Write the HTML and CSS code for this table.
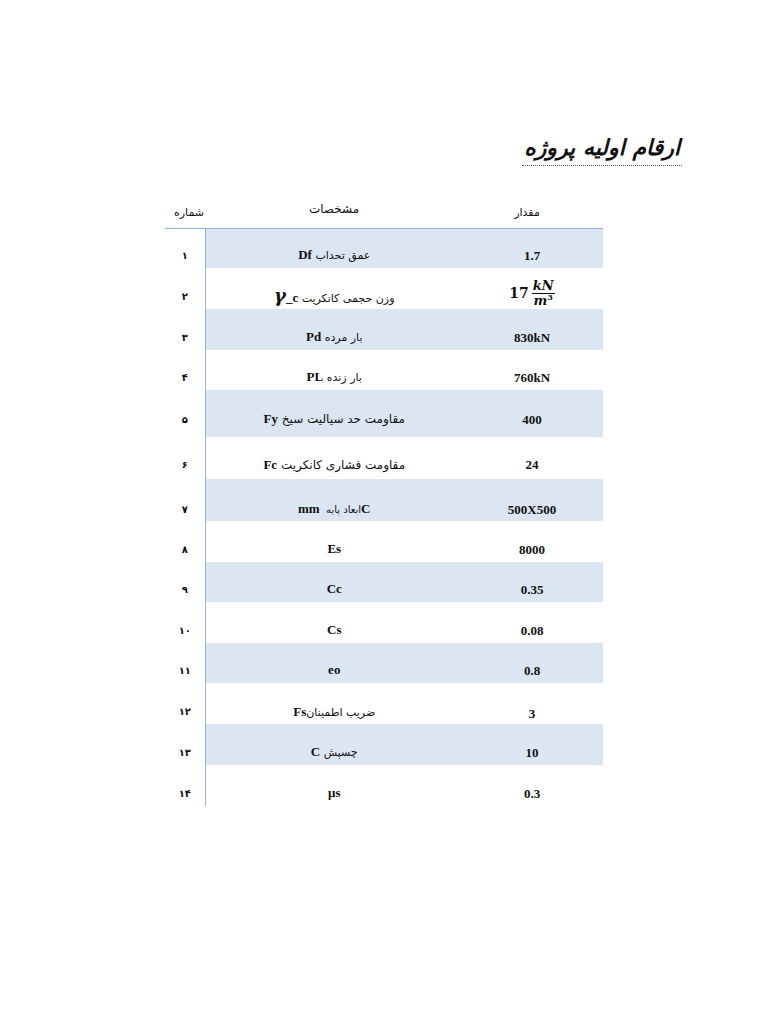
FILE: index.html
```html
<!DOCTYPE html>
<html lang="fa">
<head>
<meta charset="utf-8">
<title>ارقام اولیه پروژه</title>
<link rel="stylesheet" href="styles.css">
</head>
<body>
<div class="page">
  <div class="title-row">
    <h1 class="title" dir="rtl">ارقام اولیه پروژه</h1>
  </div>
  <table class="data">
    <colgroup>
      <col class="col-num">
      <col class="col-spec">
      <col class="col-val">
    </colgroup>
    <thead>
      <tr>
        <th class="c-num" dir="rtl">شماره</th>
        <th class="c-spec" dir="rtl">مشخصات</th>
        <th class="c-val" dir="rtl">مقدار</th>
      </tr>
    </thead>
    <tbody>
      <tr class="shade h40"><td class="c-num">۱</td><td class="c-spec" dir="rtl">عمق تحداب <b>Df</b></td><td class="c-val">1.7</td></tr>
      <tr class="h41 r2"><td class="c-num">۲</td><td class="c-spec" dir="rtl">وزن حجمی کانکریت <span class="gamma">γ</span><b>_c</b></td><td class="c-val"><span class="unit"><b>17</b><span class="frac"><span class="num">kN</span><span class="den">m<sup>3</sup></span></span></span></td></tr>
      <tr class="shade h41"><td class="c-num">۳</td><td class="c-spec" dir="rtl">بار مرده <b>Pd</b></td><td class="c-val">830kN</td></tr>
      <tr class="h40"><td class="c-num">۴</td><td class="c-spec" dir="rtl">بار زنده <b>PL</b></td><td class="c-val">760kN</td></tr>
      <tr class="shade h47 r5"><td class="c-num">۵</td><td class="c-spec big" dir="rtl">مقاومت حد سیالیت سیخ <b>Fy</b></td><td class="c-val">400</td></tr>
      <tr class="h42 r6"><td class="c-num">۶</td><td class="c-spec big" dir="rtl">مقاومت فشاری کانکریت <b>Fc</b></td><td class="c-val">24</td></tr>
      <tr class="shade h42 r7"><td class="c-num">۷</td><td class="c-spec small" dir="rtl"><b>C</b>ابعاد پایه&nbsp;&nbsp;<b>mm</b></td><td class="c-val">500X500</td></tr>
      <tr class="h41"><td class="c-num">۸</td><td class="c-spec"><b>Es</b></td><td class="c-val">8000</td></tr>
      <tr class="shade h40"><td class="c-num">۹</td><td class="c-spec"><b>Cc</b></td><td class="c-val">0.35</td></tr>
      <tr class="h41"><td class="c-num">۱۰</td><td class="c-spec"><b>Cs</b></td><td class="c-val">0.08</td></tr>
      <tr class="shade h40"><td class="c-num">۱۱</td><td class="c-spec"><b>eo</b></td><td class="c-val">0.8</td></tr>
      <tr class="h41 r12"><td class="c-num">۱۲</td><td class="c-spec" dir="rtl">ضریب اطمینان<b>Fs</b></td><td class="c-val">3</td></tr>
      <tr class="shade h41"><td class="c-num">۱۳</td><td class="c-spec" dir="rtl">چسپش <b>C</b></td><td class="c-val">10</td></tr>
      <tr class="h41"><td class="c-num">۱۴</td><td class="c-spec"><b>μs</b></td><td class="c-val">0.3</td></tr>
    </tbody>
  </table>
</div>
</body>
</html>
```

FILE: styles.css
```css
html, body {
  margin: 0;
  padding: 0;
  background: #ffffff;
}

body {
  font-family: "Liberation Serif", "DejaVu Sans", serif;
  color: #111111;
}

.page {
  width: 768px;
  height: 1024px;
  padding-top: 131px;
  box-sizing: border-box;
}

.title-row {
  display: flex;
  justify-content: flex-end;
  padding-right: 86px;
}

.title {
  margin: 0;
  font-family: "DejaVu Sans", sans-serif;
  font-weight: bold;
  font-size: 22px;
  line-height: 34px;
  font-style: italic;
  border-bottom: 1px dotted #555555;
  padding: 0 2px;
}

.data {
  margin-top: 32px;
  margin-left: 165px;
  width: 438px;
  border-collapse: collapse;
  table-layout: fixed;
}

.col-num { width: 40px; }
.col-spec { width: 258px; }
.col-val { width: 140px; }

.data th,
.data td {
  box-sizing: border-box;
}

.data th {
  font-family: "DejaVu Sans", sans-serif;
  font-weight: normal;
  font-size: 11px;
  height: 30px;
  padding: 0 0 9px 0;
  vertical-align: bottom;
  border-bottom: 1px solid #8db3e2;
}

.data th.c-num {
  text-align: right;
  padding-right: 1px;
}

.data th.c-spec {
  padding-bottom: 12px;
  font-size: 12px;
}

.data th.c-val {
  text-align: center;
  padding-right: 12px;
}

.data td {
  text-align: center;
  vertical-align: bottom;
  padding: 0 0 4px 0;
  font-size: 13px;
  font-weight: bold;
  line-height: 16px;
}

.data td.c-num {
  font-family: "DejaVu Sans", sans-serif;
  font-size: 10px;
  font-weight: bold;
  text-align: center;
  border-right: 1px solid #8db3e2;
}

.data td.c-spec {
  font-family: "DejaVu Sans", "Liberation Serif", sans-serif;
  font-weight: normal;
  font-size: 11px;
}

.data td.c-spec b {
  font-family: "Liberation Serif", serif;
  font-weight: bold;
  font-size: 13px;
}

.data td.c-spec.big {
  font-size: 12px;
}

.data td.c-spec.small {
  font-size: 10px;
}

.data td.c-val {
  padding-right: 2px;
}

.data tr.r2 td.c-spec { padding-bottom: 2px; }
.data tr.r5 td { padding-bottom: 9px; }
.data tr.r5 td.c-spec { padding-bottom: 10px; }
.data tr.r6 td { padding-bottom: 6px; }
.data tr.r7 td { padding-bottom: 3px; }
.data tr.r12 td.c-spec { padding-bottom: 3px; }
.data tr.r12 td.c-val { padding-bottom: 2px; }

.data tr.shade td.c-spec,
.data tr.shade td.c-val {
  background: #dce6f2;
}

.h40 { height: 40px; }
.h41 { height: 41px; }
.h42 { height: 42px; }
.h47 { height: 47px; }

.gamma {
  font-family: "DejaVu Serif", serif;
  font-style: italic;
  font-weight: bold;
  font-size: 18px;
}

.unit {
  display: inline-flex;
  align-items: center;
  gap: 3px;
  font-family: "DejaVu Serif", serif;
  font-size: 14px;
  position: relative;
  top: 2px;
}

.frac {
  display: inline-flex;
  flex-direction: column;
  align-items: center;
  font-style: italic;
  font-size: 13px;
  line-height: 13px;
}

.frac .num {
  border-bottom: 1px solid #111111;
  padding: 0 1px 1px;
}

.frac .den sup {
  font-size: 8px;
  font-style: normal;
  vertical-align: 5px;
  line-height: 0;
}
```
